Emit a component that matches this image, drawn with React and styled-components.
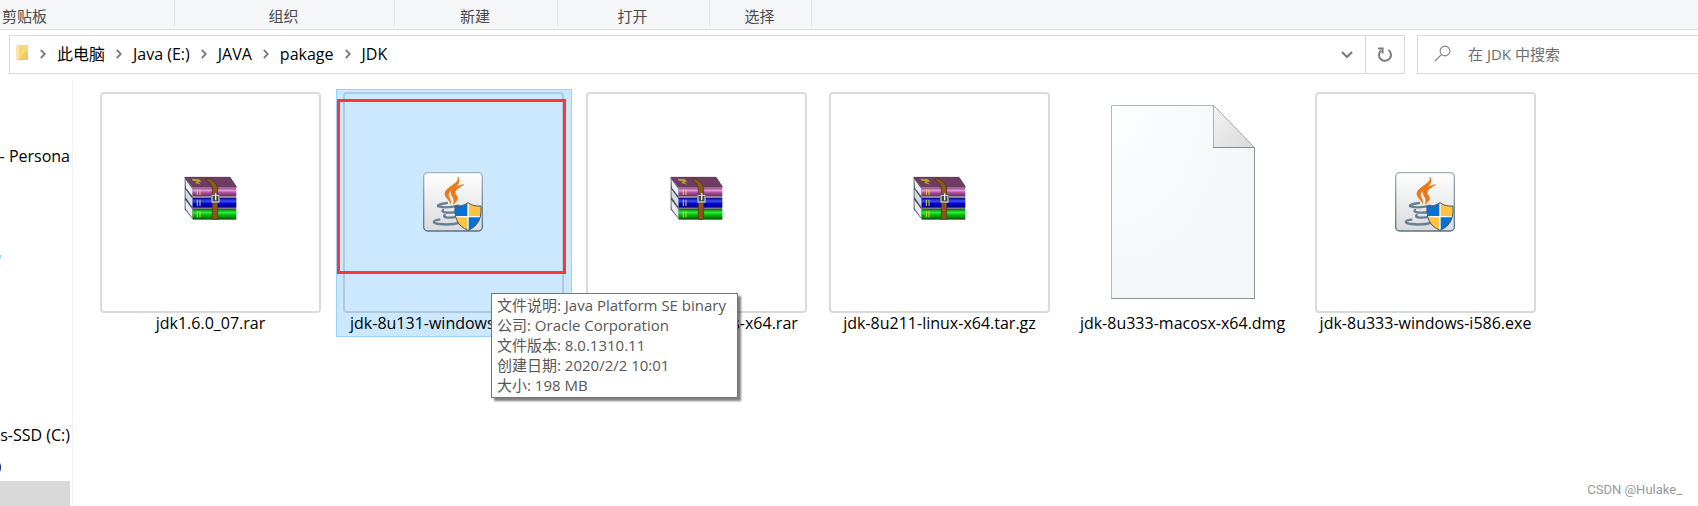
import React from 'react';
import styled, { createGlobalStyle } from 'styled-components';

const GlobalStyle = createGlobalStyle`
  * {
    box-sizing: border-box;
  }
  body {
    margin: 0;
    background: #ffffff;
    color: #000000;
    font-family: "Open Sans", "Noto Sans CJK SC", sans-serif;
    font-size: 15px;
    line-height: 22px;
  }
  button, input {
    font: inherit;
  }
`;

const Window = styled.div`
  position: relative;
  display: flex;
  flex-direction: column;
  min-height: 100vh;
  overflow: hidden;
`;

const Ribbon = styled.div`
  display: flex;
  height: 30px;
  padding-bottom: 3px;
  background: #f4f6f8;
  border-bottom: 1px solid #d9dbdd;
  color: #4b4b4b;
`;

const RibbonGroup = styled.div`
  width: ${props => props.$width}px;
  padding: ${props => (props.$start ? '6px 0 0 2px' : '6px 2px 0 0')};
  border-right: 1px solid #e0e1e3;
  text-align: ${props => (props.$start ? 'left' : 'center')};
  line-height: 20px;
`;

const Toolbar = styled.div`
  display: flex;
  gap: 12px;
  padding: 5px 0 0 9px;
`;

const AddressBar = styled.div`
  display: flex;
  flex: 1;
  height: 39px;
  border: 1px solid #d9d9d9;
`;

const Crumbs = styled.nav`
  display: flex;
  flex: 1;
  align-items: center;
  gap: 11px;
  padding: 0 0 2px 6px;
`;

const Crumb = styled.a`
  color: #000000;
  font-size: 16px;
  text-decoration: none;
  white-space: nowrap;
`;

const BarButton = styled.button`
  display: flex;
  align-items: center;
  justify-content: center;
  width: ${props => props.$width}px;
  padding: 0;
  border: 0;
  border-left: ${props => (props.$divided ? '1px solid #d9d9d9' : '0')};
  background: none;
`;

const SearchBox = styled.label`
  display: flex;
  align-items: center;
  gap: 17px;
  width: 281px;
  height: 39px;
  padding: 0 0 2px 16px;
  border: 1px solid #d9d9d9;
  border-right: 0;
`;

const SearchInput = styled.input`
  flex: 1;
  min-width: 0;
  padding: 0;
  border: 0;
  outline: 0;
  background: none;
  &::placeholder {
    color: #6d6d6d;
    opacity: 1;
  }
`;

const Body = styled.div`
  display: flex;
  flex: 1;
  padding-top: 7px;
`;

const Sidebar = styled.nav`
  display: flex;
  flex-direction: column;
  width: 73px;
  height: calc(100vh - 81px);
  padding: 59px 2px 0 0;
  border-right: 1px solid #f3f3f3;
  overflow: hidden;
`;

const SideRow = styled.a`
  display: flex;
  flex: none;
  align-items: center;
  justify-content: flex-end;
  height: 31px;
  background: ${props => (props.$active ? '#d9d9d9' : 'transparent')};
  color: #000000;
  font-size: 16px;
  text-decoration: none;
  white-space: nowrap;
`;

const IconEdge = styled.svg`
  margin-right: auto;
`;

const Files = styled.main`
  display: flex;
  flex: 1;
  flex-wrap: wrap;
  align-content: flex-start;
  gap: 7px;
  padding: 8px 0 0 20px;
`;

const Tile = styled.div`
  position: relative;
  z-index: ${props => (props.$selected ? 1 : 0)};
  display: flex;
  flex-direction: column;
  align-items: center;
  width: 236px;
  padding: 2px 7px 2px 6px;
  border: 1px solid ${props => (props.$selected ? '#99d1ff' : 'transparent')};
  background: ${props => (props.$selected ? '#cce8ff' : 'transparent')};
`;

const Thumb = styled.div`
  display: flex;
  align-items: center;
  justify-content: center;
  width: 221px;
  height: 221px;
  padding: 0 1px 1px 0;
  border: 2px solid ${props => (props.$selected ? '#b0c8dd' : '#dadada')};
  border-color: ${props => (props.$bare ? 'transparent' : undefined)};
  border-radius: 4px;
`;

const FileName = styled.span`
  font-size: 16px;
  line-height: 21px;
  white-space: nowrap;
`;

const Marker = styled.div`
  position: absolute;
  top: 9px;
  left: 0;
  width: 229px;
  height: 175px;
  border: 3px solid #fc3535;
`;

const Tooltip = styled.div`
  position: absolute;
  top: 203px;
  left: 154px;
  width: 247px;
  padding: 1px 0 2px 5px;
  border: 1px solid #767676;
  background: #ffffff;
  box-shadow: 3px 3px 2px rgba(0, 0, 0, 0.5);
  color: #575757;
  line-height: 20px;
  white-space: nowrap;
`;

const Watermark = styled.div`
  position: absolute;
  right: 16px;
  bottom: 5px;
  color: #999999;
  font-family: Roboto, sans-serif;
  font-size: 13px;
`;

function FolderIcon() {
  return (
    <svg width="13" height="17" viewBox="0 0 13 17">
      <path d="M2 0H12V15H2z" fill="#f7d77c" />
      <path d="M8 8L12 6V15H3z" fill="#f1c963" />
      <path d="M0 0L3 2V17L0 15z" fill="#fbe6a6" />
    </svg>
  );
}

function Chevron() {
  return (
    <svg width="6" height="10" viewBox="0 0 6 10" fill="none" stroke="#7a7a7a" strokeWidth="1.8">
      <path d="M.8 1L4.8 5L.8 9" />
    </svg>
  );
}

function RarIcon() {
  return (
    <svg width="60" height="60" viewBox="28 34 180 180">
      <defs>
        <linearGradient id="plum" x1="0" y1="0" x2="0" y2="1">
          <stop offset="0" stopColor="#8a3a80" />
          <stop offset=".35" stopColor="#dc9ad2" />
          <stop offset=".6" stopColor="#ac4ca0" />
          <stop offset="1" stopColor="#6a2a62" />
        </linearGradient>
        <linearGradient id="navy" x1="0" y1="0" x2="0" y2="1">
          <stop offset="0" stopColor="#00008a" />
          <stop offset=".35" stopColor="#3c50f0" />
          <stop offset=".6" stopColor="#0000d8" />
          <stop offset="1" stopColor="#000078" />
        </linearGradient>
        <linearGradient id="leaf" x1="0" y1="0" x2="0" y2="1">
          <stop offset="0" stopColor="#007a00" />
          <stop offset=".35" stopColor="#30e840" />
          <stop offset=".6" stopColor="#00bc00" />
          <stop offset="1" stopColor="#006a00" />
        </linearGradient>
      </defs>
      <path d="M42 51L66 80V176L42 146z" fill="#50505c" />
      <path d="M44 56L65 84V106L46 82z" fill="#e8edf5" />
      <path d="M44 86L65 114V139L45 110z" fill="#d5dce9" />
      <path d="M44 118L65 146V172L45 144z" fill="#e8edf5" />
      <path d="M42 50H178L197 78H66z" fill="#713c63" stroke="#351a30" strokeWidth="2" />
      <path d="M62 54L84 55L92 63L82 64L92 72L74 67L78 62L66 60z" fill="#b5a51b" />
      <path d="M66 80H197V107H66z" fill="url(#plum)" />
      <path d="M66 111H197V141H66z" fill="url(#navy)" />
      <path d="M66 145H197V175H66z" fill="url(#leaf)" />
      <path d="M66 109H197M66 143H197M66 176H197" stroke="#101018" strokeWidth="2" />
      <path d="M80 86V103M88 86V103M80 117V136M88 117V136M80 151V170M88 151V170" stroke="#e2d633" strokeWidth="3" />
      <path d="M106 54L120 55Q139 67 141 82V102H125V84Q122 66 106 58z" fill="#8b5a22" stroke="#4a2b0b" strokeWidth="2" />
      <path d="M125 126H141V176H125z" fill="#8b5521" stroke="#54300e" strokeWidth="2" />
      <path d="M121 101H148V127H121z" fill="#2c2c2c" />
      <path d="M124 104H145V124H124z" fill="#474747" stroke="#c4c4c4" strokeWidth="4" />
      <path d="M135 98V119" stroke="#f0f0f0" strokeWidth="4" />
    </svg>
  );
}

function JavaIcon() {
  return (
    <svg width="60" height="60" viewBox="39 37 180 180">
      <defs>
        <linearGradient id="plate" x1="0" y1="0" x2="0" y2="1">
          <stop offset="0" stopColor="#ffffff" />
          <stop offset="1" stopColor="#d9dadc" />
        </linearGradient>
        <linearGradient id="rim" x1="0" y1="0" x2="0" y2="1">
          <stop offset="0" stopColor="#a5b1bb" />
          <stop offset="1" stopColor="#56738a" />
        </linearGradient>
        <clipPath id="shield">
          <path d="M174 129C163 138 149 140 135 139C133 174 141 198 174 212C207 198 215 174 213 139C199 140 185 138 174 129z" />
        </clipPath>
      </defs>
      <rect x="41" y="39" width="176" height="175" rx="12" fill="url(#plate)" stroke="url(#rim)" strokeWidth="4" />
      <g fill="#e97817" stroke="#e97817" strokeWidth="2" strokeLinejoin="round">
        <path d="M144 52C150 72 108 82 105 100C104 113 118 120 122 132C124 118 113 112 116 102C122 86 158 78 144 52z" />
        <path d="M161 75C139 78 121 88 123 100C124 110 135 114 131 133C144 122 145 114 138 106C131 96 138 88 161 75z" />
      </g>
      <g fill="none" stroke="#657f95" strokeWidth="7" strokeLinecap="round">
        <path d="M111 130C91 133 78 137 86 140C101 145 129 142 145 138" />
        <path d="M99 151C91 159 119 161 140 157" />
        <path d="M104 166C96 175 121 176 142 171" />
        <path d="M88 180C67 183 65 190 88 193C111 196 140 192 154 188" />
      </g>
      <g clipPath="url(#shield)">
        <path d="M130 125H174V171H130zM174 171H218V217H174z" fill="#0870d0" />
        <path d="M174 125H218V171H174zM130 171H174V217H130z" fill="#ffc342" />
        <path d="M174 125V217M130 171H218" stroke="#ffffff" strokeWidth="4" />
      </g>
      <path d="M174 129C163 138 149 140 135 139C133 174 141 198 174 212C207 198 215 174 213 139C199 140 185 138 174 129z" fill="none" stroke="#50565b" strokeWidth="3" />
    </svg>
  );
}

function PageIcon() {
  return (
    <svg width="146" height="194" viewBox="-2 0 146 194">
      <defs>
        <radialGradient id="paper" cx="0" cy="0" r="1">
          <stop offset="0" stopColor="#fdfefe" />
          <stop offset="1" stopColor="#f4f6f8" />
        </radialGradient>
        <linearGradient id="fold" x1="0" y1="0" x2="1" y2="1">
          <stop offset="0" stopColor="#f3f3f3" />
          <stop offset="1" stopColor="#d9d9d9" />
        </linearGradient>
      </defs>
      <path d="M.5 .5H102.5L143.5 42.5V193.5H.5z" fill="url(#paper)" stroke="#b5b7b8" />
      <path d="M143.5 42.5V193.5H.5" fill="none" stroke="#8e9091" />
      <path d="M102.5 .5V42.5H143.5z" fill="url(#fold)" stroke="#b0b0b0" />
      <path d="M102 42.5H143.5" stroke="#8b8b8b" />
    </svg>
  );
}

const icons = {
  rar: RarIcon,
  java: JavaIcon,
  page: PageIcon,
};

const groups = [
  { name: '剪贴板', width: 175, start: true },
  { name: '组织', width: 220 },
  { name: '新建', width: 163 },
  { name: '打开', width: 152 },
  { name: '选择', width: 102 },
];

const path = ['此电脑', 'Java (E:)', 'JAVA', 'pakage', 'JDK'];

const sideRows = [
  { text: '- Persona' },
  {},
  {},
  { edge: 'M0 15H1V18H0z', color: '#7fdcff' },
  {},
  {},
  {},
  {},
  {},
  { text: 's-SSD (C:)' },
  { edge: 'M0 6Q2 10 0 15z', color: '#00247d' },
  { active: true },
];

const files = [
  { name: 'jdk1.6.0_07.rar', icon: 'rar' },
  { name: 'jdk-8u131-windows-x64.exe', icon: 'java', selected: true },
  { name: 'jdk-8u131-windows-x64.rar', icon: 'rar' },
  { name: 'jdk-8u211-linux-x64.tar.gz', icon: 'rar' },
  { name: 'jdk-8u333-macosx-x64.dmg', icon: 'page' },
  { name: 'jdk-8u333-windows-i586.exe', icon: 'java' },
];

const details = [
  '文件说明: Java Platform SE binary',
  '公司: Oracle Corporation',
  '文件版本: 8.0.1310.11',
  '创建日期: 2020/2/2 10:01',
  '大小: 198 MB',
];

function File({ file }) {
  const Icon = icons[file.icon];

  return (
    <Tile $selected={file.selected}>
      <Thumb $selected={file.selected} $bare={file.icon === 'page'}>
        <Icon />
      </Thumb>
      <FileName>{file.name}</FileName>
      {file.selected && (
        <>
          <Marker />
          <Tooltip role="tooltip">
            {details.map(line => <div key={line}>{line}</div>)}
          </Tooltip>
        </>
      )}
    </Tile>
  );
}

function App() {
  return (
    <>
      <GlobalStyle />
      <Window>
        <Ribbon>
          {groups.map(group => (
            <RibbonGroup key={group.name} $width={group.width} $start={group.start}>{group.name}</RibbonGroup>
          ))}
        </Ribbon>
        <Toolbar>
          <AddressBar>
            <Crumbs>
              <FolderIcon />
              {path.map(name => (
                <React.Fragment key={name}>
                  <Chevron />
                  <Crumb href="#">{name}</Crumb>
                </React.Fragment>
              ))}
            </Crumbs>
            <BarButton $width={36} aria-label="历史记录">
              <svg width="12" height="8" viewBox="0 0 12 8" fill="none" stroke="#777777" strokeWidth="2">
                <path d="M1 1L6 6L11 1" />
              </svg>
            </BarButton>
            <BarButton $width={39} $divided aria-label="刷新">
              <svg width="16" height="16" viewBox="0 0 16 16" fill="none" stroke="#7c7c7c" strokeWidth="2">
                <path d="M11.5 3A6 6 0 1 1 4 3.4" />
                <path d="M1 1.6H5.6V6.4" />
              </svg>
            </BarButton>
          </AddressBar>
          <SearchBox>
            <svg width="17" height="17" viewBox="0 0 17 17" fill="none" stroke="#80808c" strokeWidth="1.1">
              <circle cx="11" cy="6" r="4.9" />
              <path d="M7.4 9.6L1 16" />
            </svg>
            <SearchInput type="text" placeholder="在 JDK 中搜索" aria-label="搜索" />
          </SearchBox>
        </Toolbar>
        <Body>
          <Sidebar>
            {sideRows.map((row, i) => (
              <SideRow key={i} href="#" $active={row.active}>
                {row.edge && (
                  <IconEdge width="1" height="18" viewBox="0 0 1 18">
                    <path d={row.edge} fill={row.color} />
                  </IconEdge>
                )}
                {row.text}
              </SideRow>
            ))}
          </Sidebar>
          <Files>
            {files.map(file => <File key={file.name} file={file} />)}
          </Files>
        </Body>
        <Watermark>CSDN @Hulake_</Watermark>
      </Window>
    </>
  );
}

export default App;
